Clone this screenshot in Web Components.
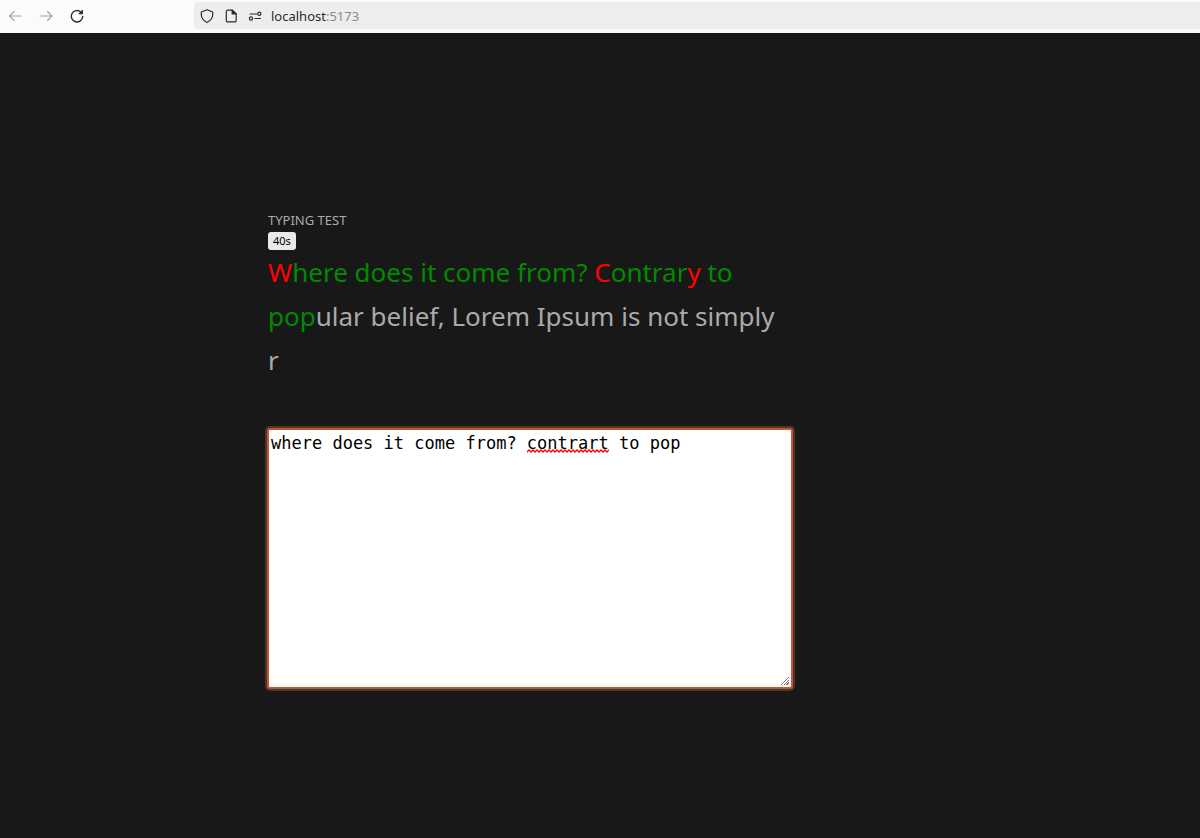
<!DOCTYPE html>
<html lang="en">
<head>
<meta charset="UTF-8">
<meta name="viewport" content="width=device-width, initial-scale=1.0">
<title>Typing test</title>
<style>
  body {
    margin: 0;
    min-height: 100vh;
    display: flex;
    flex-direction: column;
    background-color: #181818;
    color: #aaa;
    font-family: "Noto Sans", "Open Sans", sans-serif;
  }
</style>
</head>
<body>
<browser-bar host="localhost" port=":5173"></browser-bar>
<typing-test seconds="40">
  <typing-text slot="text" typed="where does it come from? contrart to pop">Where does it come from? Contrary to popular belief, Lorem Ipsum is not simply r</typing-text>
  <typing-input slot="input" value="where does it come from? contrart to pop" error-start="25" error-length="8"></typing-input>
</typing-test>

<script>
const barTemplate = document.createElement('template');
barTemplate.innerHTML = `
<style>
:host {
  display: flex;
  box-sizing: border-box;
  height: 33px;
  padding: 2px 0 4px;
  background-color: #fbfbfb;
  color: #2b2b2f;
  font-size: 13px;
}
nav {
  display: flex;
  box-sizing: border-box;
  align-items: center;
  gap: 15px;
  width: 194px;
  padding-left: 7px;
}
button {
  display: flex;
  padding: 0;
  border: none;
  background: none;
  color: inherit;
}
button:disabled {
  color: #a3a3a3;
}
svg {
  display: block;
  fill: none;
  stroke: currentColor;
  stroke-width: 1.2;
  stroke-linecap: round;
  stroke-linejoin: round;
}
.address {
  flex: 1;
  display: flex;
  align-items: center;
  gap: 8px;
  padding-left: 5px;
  border-radius: 4px 0 0 4px;
  background-color: #ededed;
}
.port {
  color: #8b8b8b;
}
</style>
<nav aria-label="Browser">
  <button disabled aria-label="Back"><svg width="16" height="16" viewBox="0 0 16 16"><path d="M14 8H2.500M7 3.500L2.500 8 7 12.500"/></svg></button>
  <button disabled aria-label="Forward"><svg width="16" height="16" viewBox="0 0 16 16"><path d="M2.500 8H14M9.500 3.500L14 8l-4.500 4.500"/></svg></button>
  <button aria-label="Reload"><svg width="16" height="16" viewBox="0 0 16 16"><path stroke-width="1.400" d="M13.700 8.500A5.700 5.700 0 1 1 11.800 4"/><path fill="currentColor" stroke-width="1" d="M13.500 2.500v3.300h-3.300z"/></svg></button>
</nav>
<div class="address">
  <svg width="16" height="16" viewBox="0 0 16 16"><path d="M8 1.800l5.700 2.200v2.500c0 3.500-2 6-5.700 8-3.700-2-5.700-4.500-5.700-8V4z"/></svg>
  <svg width="16" height="16" viewBox="0 0 16 16"><path d="M4.700 2.200h4.500l4 3.800v6.500a1.400 1.400 0 0 1-1.400 1.400H4.700a1.400 1.400 0 0 1-1.400-1.400V3.600a1.400 1.400 0 0 1 1.400-1.400z"/><path fill="currentColor" d="M9.200 2.200V6h4z"/></svg>
  <svg width="16" height="16" viewBox="0 0 16 16"><path d="M3 6h6.500M8 10.500h5.500"/><circle cx="12.300" cy="5.700" r="1.600"/><circle cx="4" cy="10.500" r="1.600"/></svg>
  <div><span class="host"></span><span class="port"></span></div>
</div>
`;

class BrowserBar extends HTMLElement {
	constructor() {
		super();
		const shadow = this.attachShadow({mode: 'open'});
		shadow.appendChild(barTemplate.content.cloneNode(true));
	}
	connectedCallback() {
		this.shadowRoot.querySelector('.host').textContent = this.getAttribute('host');
		this.shadowRoot.querySelector('.port').textContent = this.getAttribute('port');
	}
}

const testTemplate = document.createElement('template');
testTemplate.innerHTML = `
<style>
:host {
  flex: 1;
  display: grid;
  grid-template-columns: 268fr 524fr 408fr;
  align-items: start;
  padding: 179px 0 40px;
}
main {
  grid-column: 2;
  display: flex;
  flex-direction: column;
  align-items: stretch;
}
h1 {
  margin: 0 0 4px;
  font-size: 13px;
  font-weight: 400;
  line-height: 16px;
}
button {
  align-self: flex-start;
  box-sizing: border-box;
  height: 18px;
  padding: 0 5px;
  border: none;
  border-radius: 3px;
  background-color: #e9e9ed;
  color: #000;
  font-family: inherit;
  font-size: 11px;
  line-height: 18px;
}
</style>
<main>
  <h1>TYPING TEST</h1>
  <button></button>
  <slot name="text"></slot>
  <slot name="input"></slot>
</main>
`;

class TypingTest extends HTMLElement {
	constructor() {
		super();
		const shadow = this.attachShadow({mode: 'open'});
		shadow.appendChild(testTemplate.content.cloneNode(true));
	}
	connectedCallback() {
		this.shadowRoot.querySelector('button').textContent = this.getAttribute('seconds') + 's';
	}
}

const textTemplate = document.createElement('template');
textTemplate.innerHTML = `
<style>
:host {
  display: block;
}
p {
  margin: 0 0 47px;
  padding-right: 8px;
  font-size: 26px;
  line-height: 44px;
}
.correct {
  color: #008a00;
}
.wrong {
  color: #f00;
}
</style>
<p></p>
`;

class TypingText extends HTMLElement {
	constructor() {
		super();
		const shadow = this.attachShadow({mode: 'open'});
		shadow.appendChild(textTemplate.content.cloneNode(true));
	}
	connectedCallback() {
		const text = this.textContent.trim();
		const typed = this.getAttribute('typed');
		const p = this.shadowRoot.querySelector('p');
		let span = null;
		// letters of one word with the same state share a span
		for (let i = 0; i < text.length; i++) {
			const state = i >= typed.length ? 'pending' : text[i] === typed[i] ? 'correct' : 'wrong';
			if (!span || span.className !== state || text[i - 1] === ' ') {
				span = document.createElement('span');
				span.className = state;
				p.appendChild(span);
			}
			span.textContent += text[i];
		}
	}
}

const inputTemplate = document.createElement('template');
inputTemplate.innerHTML = `
<style>
:host {
  display: block;
  position: relative;
  font-family: "DejaVu Sans Mono", monospace;
  font-size: 17px;
}
textarea {
  display: block;
  width: 100%;
  height: 259px;
  box-sizing: border-box;
  padding: 3px 2px;
  border: 1px solid #f04a1c;
  border-radius: 2px;
  outline: none;
  box-shadow: 0 0 0 1px #85685c, 0 0 0 3px #60301f;
  background-color: #fff;
  color: #000;
  font: inherit;
  line-height: 20px;
  resize: both;
}
textarea::-webkit-resizer {
  background:
    linear-gradient(135deg, #fff 50%, transparent 50%) 3px 3px / 10px 10px no-repeat,
    repeating-linear-gradient(135deg, #777 0 1px, #fff 1px 2px) 3px 3px / 10px 10px no-repeat;
}
/* spelling mark below the misspelt word */
svg {
  position: absolute;
  top: 20px;
  height: 4px;
  margin-left: 3px;
  pointer-events: none;
}
</style>
<textarea aria-label="Type the text" spellcheck="false"></textarea>
<svg aria-hidden="true">
  <defs><pattern id="wave" width="4" height="4" patternUnits="userSpaceOnUse"><path d="M-1 4L2 1l3 3" fill="none" stroke="#f00" stroke-width="1.300"/></pattern></defs>
  <rect width="100%" height="4" fill="url(#wave)"/>
</svg>
`;

class TypingInput extends HTMLElement {
	constructor() {
		super();
		const shadow = this.attachShadow({mode: 'open'});
		shadow.appendChild(inputTemplate.content.cloneNode(true));
	}
	connectedCallback() {
		const mark = this.shadowRoot.querySelector('svg');
		this.shadowRoot.querySelector('textarea').value = this.getAttribute('value');
		mark.style.left = this.getAttribute('error-start') + 'ch';
		mark.style.width = this.getAttribute('error-length') + 'ch';
	}
}

customElements.define('browser-bar', BrowserBar);
customElements.define('typing-test', TypingTest);
customElements.define('typing-text', TypingText);
customElements.define('typing-input', TypingInput);
</script>
</body>
</html>
